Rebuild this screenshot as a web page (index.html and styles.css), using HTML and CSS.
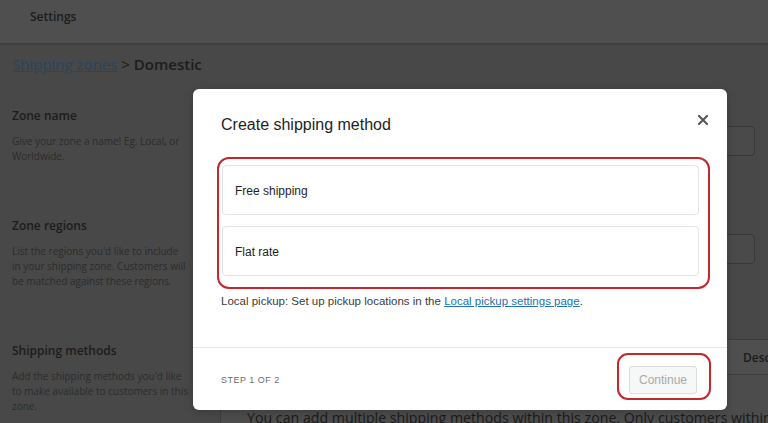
FILE: index.html
```html
<!DOCTYPE html>
<html lang="en">
<head>
<meta charset="utf-8">
<title>Shipping zones - Domestic</title>
<link rel="stylesheet" href="styles.css">
</head>
<body>
<header class="topbar"><span class="topbar-title">Settings</span></header>
<main class="page">
  <h1 class="crumbs"><a href="#" class="crumb-link">Shipping zones</a> <span class="crumb-sep">&gt;</span> <span class="crumb-current">Domestic</span></h1>

  <section class="zone-section">
    <div class="zone-info">
      <h2 class="zone-heading">Zone name</h2>
      <p class="zone-desc">Give your zone a name! Eg. Local, or<br>Worldwide.</p>
    </div>
    <div class="zone-field"><input class="text-input" type="text"></div>
  </section>

  <section class="zone-section">
    <div class="zone-info">
      <h2 class="zone-heading">Zone regions</h2>
      <p class="zone-desc">List the regions you'd like to include<br>in your shipping zone. Customers will<br>be matched against these regions.</p>
    </div>
    <div class="zone-field"><input class="text-input" type="text"></div>
  </section>

  <section class="zone-section">
    <div class="zone-info">
      <h2 class="zone-heading">Shipping methods</h2>
      <p class="zone-desc">Add the shipping methods you'd like<br>to make available to customers in this<br>zone.</p>
    </div>
    <div class="zone-field">
      <div class="methods-table">
        <div class="methods-head">
          <span class="col-title">Title</span>
          <span class="col-enabled">Enabled</span>
          <span class="col-desc">Description</span>
        </div>
        <div class="methods-empty">You can add multiple shipping methods within this zone. Only customers within the zone will see them.</div>
      </div>
    </div>
  </section>
</main>

<div class="modal" role="dialog" aria-label="Create shipping method">
  <div class="modal-head">
    <h2 class="modal-title">Create shipping method</h2>
    <button class="modal-close" type="button" aria-label="Close">
      <svg width="10" height="10" viewBox="0 0 10 10"><path d="M1 1 L9 9 M9 1 L1 9" stroke="#555" stroke-width="2" stroke-linecap="square" fill="none"/></svg>
    </button>
  </div>
  <div class="method-list">
    <div class="method-card">Free shipping</div>
    <div class="method-card">Flat rate</div>
  </div>
  <p class="pickup-note">Local pickup: Set up pickup locations in the <a href="#" class="pickup-link">Local pickup settings page</a>.</p>
  <div class="modal-foot">
    <span class="step">Step 1 of 2</span>
    <button class="continue-btn" type="button" disabled>Continue</button>
  </div>
  <div class="annot annot-methods"></div>
  <div class="annot annot-continue"></div>
</div>
</body>
</html>
```

FILE: styles.css
```css
html, body {
  margin: 0;
  padding: 0;
  overflow: hidden;
}

body {
  position: relative;
  width: 768px;
  height: 423px;
  background: #484848;
  font-family: "Open Sans", "Noto Sans", sans-serif;
  color: #1c1c1c;
}

.topbar {
  height: 43px;
  box-sizing: border-box;
  padding: 9px 0 0 30px;
  background: #4f4f4f;
  box-shadow: 0 1px 3px rgba(0, 0, 0, 0.25);
  position: relative;
}

.topbar-title {
  display: block;
  font-size: 12px;
  line-height: 16px;
  font-weight: 600;
  color: #1c1c1c;
}

.page {
  padding: 11px 0 0 12px;
}

.crumbs {
  margin: 0;
  font-size: 15px;
  line-height: 20px;
  font-weight: 400;
  color: #1c1c1c;
  white-space: nowrap;
}

.crumb-link {
  color: #29445e;
  text-decoration: underline;
}

.crumb-current {
  font-weight: 600;
}

.zone-section {
  display: grid;
  grid-template-columns: 180px 700px;
  column-gap: 28px;
  align-items: start;
  margin-top: 54px;
}

.crumbs + .zone-section {
  margin-top: 34px;
}

.zone-heading {
  margin: 0;
  font-size: 12px;
  line-height: 16px;
  font-weight: 600;
  color: #1c1c1c;
}

.zone-desc {
  margin: 10px 0 0;
  font-size: 10px;
  line-height: 15px;
  color: #2c2c2c;
  white-space: nowrap;
}

.text-input {
  display: block;
  width: 535px;
  height: 30px;
  box-sizing: border-box;
  margin-top: 18px;
  border: 1px solid #383838;
  border-radius: 4px;
  background: #4a4a4a;
}

.zone-section:nth-of-type(2) .text-input {
  margin-top: 16px;
}

.methods-table {
  margin-top: -4px;
  border: 1px solid #3c3c3c;
  background: #4c4c4c;
}

.methods-head {
  display: grid;
  grid-template-columns: 250px 256px 1fr;
  height: 34px;
  align-items: center;
  background: #4f4f4f;
  border-bottom: 1px solid #3c3c3c;
  font-size: 12px;
  font-weight: 600;
  color: #1c1c1c;
}

.col-title,
.col-enabled,
.col-desc {
  padding-left: 16px;
}

.methods-empty {
  padding: 32px 0 10px 26px;
  font-size: 14.2px;
  line-height: 22px;
  color: #1a1a1a;
  white-space: nowrap;
}

/* Modal */
.modal {
  position: absolute;
  left: 193px;
  top: 89px;
  width: 534px;
  background: #fff;
  border-radius: 6px;
  box-shadow: 0 2px 10px rgba(0, 0, 0, 0.2);
  font-family: "Liberation Sans", Arial, sans-serif;
}

.modal-head {
  display: flex;
  justify-content: space-between;
  align-items: flex-start;
  padding: 26px 19px 0 28px;
}

.modal-title {
  margin: 0;
  font-size: 16px;
  line-height: 20px;
  font-weight: 400;
  color: #1e1e1e;
}

.modal-close {
  display: block;
  width: 10px;
  height: 10px;
  padding: 0;
  border: 0;
  background: none;
}

.modal-close svg {
  display: block;
}

.method-list {
  display: flex;
  flex-direction: column;
  gap: 11px;
  margin: 30px 28px 0 29px;
}

.method-card {
  display: flex;
  align-items: center;
  height: 50px;
  box-sizing: border-box;
  padding-left: 12px;
  padding-top: 1px;
  border: 1px solid #e3e4e6;
  border-radius: 4px;
  font-size: 12px;
  color: #1e1e1e;
}

.pickup-note {
  margin: 18px 28px 0;
  font-size: 11.5px;
  line-height: 14px;
  color: #3c3c3c;
}

.pickup-link {
  color: #2271b1;
  text-decoration: underline;
}

.modal-foot {
  display: flex;
  align-items: center;
  justify-content: space-between;
  height: 63px;
  box-sizing: border-box;
  margin-top: 39px;
  padding: 1px 30px 0 28px;
  border-top: 1px solid #e8e8e8;
}

.step {
  font-size: 9px;
  letter-spacing: 0.5px;
  text-transform: uppercase;
  color: #6d6d6d;
}

.continue-btn {
  width: 68px;
  height: 28px;
  padding: 0;
  border: 1px solid #dcdcde;
  border-radius: 3px;
  background: #f6f7f7;
  color: #a7aaad;
  font-family: "Liberation Sans", Arial, sans-serif;
  font-size: 12px;
}

/* Red annotation outlines drawn over the screenshot */
.annot {
  position: absolute;
  box-sizing: border-box;
  border: 2.5px solid #c4262e;
  border-radius: 12px;
  pointer-events: none;
}

.annot-methods {
  left: 24px;
  top: 68px;
  width: 493px;
  height: 132px;
}

.annot-continue {
  left: 424px;
  top: 264px;
  width: 94px;
  height: 47px;
  border-radius: 11px;
}
```
